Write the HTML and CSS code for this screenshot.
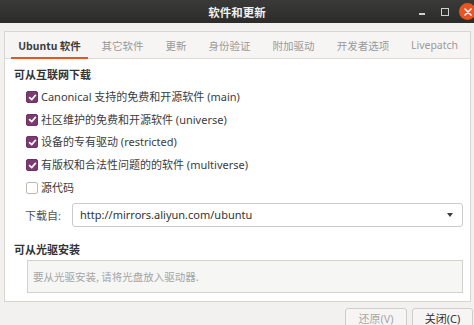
FILE: index.html
```html
<!DOCTYPE html>
<html lang="zh">
<head>
<meta charset="utf-8">
<link rel="stylesheet" href="styles.css">
</head>
<body>
<div class="window">
  <header class="titlebar">
    <div class="title">软件和更新</div>
    <div class="controls">
      <span class="ctl min"></span>
      <span class="ctl max"></span>
      <span class="ctl close">
        <svg width="8" height="8" viewBox="0 0 8 8"><path d="M1 1L7 7M7 1L1 7" stroke="#fff" stroke-width="1.6" stroke-linecap="round"/></svg>
      </span>
    </div>
  </header>
  <main class="main">
    <section class="notebook">
      <nav class="tabs">
        <span class="tab active w77">Ubuntu 软件</span>
        <span class="tab w59">其它软件</span>
        <span class="tab w38">更新</span>
        <span class="tab w59">身份验证</span>
        <span class="tab w59">附加驱动</span>
        <span class="tab w70">开发者选项</span>
        <span class="tab w63 latin">Livepatch</span>
      </nav>
      <div class="page">
        <h3 class="heading">可从互联网下载</h3>
        <ul class="checks">
          <li class="check"><span class="box on"><svg width="9" height="9" viewBox="0 0 9 9"><path d="M1.6 4.6L3.7 6.6L7.5 2.3" fill="none" stroke="#fff" stroke-width="1.7" stroke-linecap="round" stroke-linejoin="round"/></svg></span>Canonical 支持的免费和开源软件 (main)</li>
          <li class="check"><span class="box on"><svg width="9" height="9" viewBox="0 0 9 9"><path d="M1.6 4.6L3.7 6.6L7.5 2.3" fill="none" stroke="#fff" stroke-width="1.7" stroke-linecap="round" stroke-linejoin="round"/></svg></span>社区维护的免费和开源软件 (universe)</li>
          <li class="check"><span class="box on"><svg width="9" height="9" viewBox="0 0 9 9"><path d="M1.6 4.6L3.7 6.6L7.5 2.3" fill="none" stroke="#fff" stroke-width="1.7" stroke-linecap="round" stroke-linejoin="round"/></svg></span>设备的专有驱动 (restricted)</li>
          <li class="check"><span class="box on"><svg width="9" height="9" viewBox="0 0 9 9"><path d="M1.6 4.6L3.7 6.6L7.5 2.3" fill="none" stroke="#fff" stroke-width="1.7" stroke-linecap="round" stroke-linejoin="round"/></svg></span>有版权和合法性问题的的软件 (multiverse)</li>
          <li class="check"><span class="box"></span>源代码</li>
        </ul>
        <div class="source">
          <span class="label">下载自:</span>
          <div class="combo">
            <span>http://mirrors.aliyun.com/ubuntu</span>
            <span class="arrow"></span>
          </div>
        </div>
        <h3 class="heading cd">可从光驱安装</h3>
        <div class="cdbox">要从光驱安装, 请将光盘放入驱动器.</div>
      </div>
    </section>
    <footer class="actions">
      <span class="btn disabled">还原(V)</span>
      <span class="btn">关闭(C)</span>
    </footer>
  </main>
</div>
</body>
</html>
```
FILE: styles.css
```css
* { box-sizing: border-box; margin: 0; padding: 0; }
html, body { width: 474px; height: 325px; overflow: hidden; }
body {
  font-family: "Noto Sans", "Noto Sans CJK SC", sans-serif;
  font-size: 11px;
  color: #3c3c3c;
  background: #f2f1f0;
}
.window { display: flex; flex-direction: column; height: 325px; }
.titlebar {
  height: 23px;
  background: linear-gradient(#3a3a38, #2b2b29);
  display: flex;
  align-items: center;
  justify-content: center;
  position: relative;
  flex-shrink: 0;
}
.title {
  color: #f0f0f0;
  font-weight: bold;
  font-size: 11.5px;
  font-family: "Noto Sans CJK SC", sans-serif;
}
.controls {
  position: absolute;
  right: -2px;
  top: 3px;
  display: flex;
  align-items: center;
}
.ctl { display: flex; align-items: center; justify-content: center; width: 23px; height: 17px; }
.min::before { content: ""; width: 6px; height: 2px; background: #cfcfcf; margin-top: 5px; }
.max::before { content: ""; width: 6px; height: 6px; border: 1.5px solid #cfcfcf; }
.close { width: 17px; height: 17px; border-radius: 50%; background: #e9541f; margin-left: 3px; }
.main { flex: 1; padding: 8px 3px 0 4px; display: flex; flex-direction: column; }
.notebook {
  border: 1px solid #d8d6d3;
  background: #fff;
  height: 271px;
  display: flex;
  flex-direction: column;
}
.tabs {
  height: 27px;
  flex-shrink: 0;
  background: #f6f5f4;
  border-bottom: 1px solid #dcdad7;
  display: flex;
  gap: 5px;
  padding-left: 6px;
  font-family: "Noto Sans CJK SC", sans-serif;
  white-space: nowrap;
}
.tab {
  display: flex;
  align-items: center;
  justify-content: center;
  color: #9a9a9a;
  font-size: 10.5px;
  border-bottom: 2px solid transparent;
  margin-bottom: -1px;
  padding-top: 1px;
  flex-shrink: 0;
}
.w77 { width: 77px; }
.w59 { width: 59px; }
.w38 { width: 38px; }
.w70 { width: 70px; }
.w63 { width: 63px; }
.tab.active {
  color: #3c3c3c;
  font-weight: bold;
  border-bottom-color: #e95420;
}
.tab.latin { font-family: "Noto Sans", sans-serif; font-size: 10.5px; }
.page { padding: 7px 7px 0 9px; }
.heading {
  font-size: 11px;
  font-weight: bold;
  color: #333;
  font-family: "Noto Sans CJK SC", sans-serif;
  line-height: 16px;
}
.checks { list-style: none; padding: 4px 0 0 12px; }
.check {
  display: flex;
  align-items: center;
  height: 22.6px;
  line-height: 16px;
}
.box {
  width: 12px;
  height: 12px;
  border: 1px solid #bdbab6;
  border-radius: 2px;
  background: #fff;
  margin-right: 3px;
  display: flex;
  align-items: center;
  justify-content: center;
  flex-shrink: 0;
}
.box.on { background: #7b3a70; border-color: #6d3163; }
.source { display: flex; align-items: center; margin-top: 4px; padding-left: 11px; }
.label { width: 47px; color: #555; }
.combo {
  flex: 1;
  height: 24px;
  border: 1px solid #cdcbc8;
  border-radius: 3px;
  background: #fff;
  display: flex;
  align-items: center;
  justify-content: space-between;
  padding: 0 9px 0 7px;
  color: #333;
}
.arrow { width: 0; height: 0; border-left: 3.5px solid transparent; border-right: 3.5px solid transparent; border-top: 4px solid #3c3c3c; }
.heading.cd { margin-top: 14px; }
.cdbox {
  margin: 3px 0 0 13px;
  height: 33px;
  border: 1px solid #d3d1ce;
  background: #f6f6f5;
  color: #a5a5a5;
  display: flex;
  align-items: center;
  padding-left: 5px;
  font-family: "Noto Sans CJK SC", sans-serif;
  font-size: 10.5px;
}
.actions { display: flex; justify-content: flex-end; gap: 5px; padding-top: 6px; margin-right: -2px; }
.btn {
  height: 20px;
  width: 61px;
  border: 1px solid #cfcdca;
  border-radius: 3px;
  background: #f6f5f4;
  display: flex;
  align-items: center;
  justify-content: center;
  padding-top: 2px;
  color: #333;
  white-space: nowrap;
  line-height: 14px;
}
.btn.disabled { color: #a8a8a8; width: 62px; }
```
